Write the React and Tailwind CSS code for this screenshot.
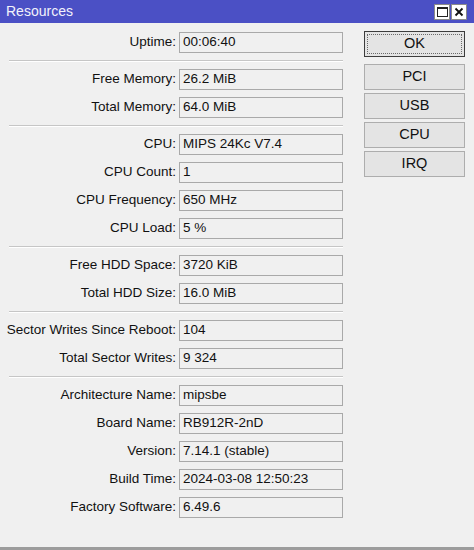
import React from 'react';

const sections = [
  [['Uptime', '00:06:40']],
  [
    ['Free Memory', '26.2 MiB'],
    ['Total Memory', '64.0 MiB'],
  ],
  [
    ['CPU', 'MIPS 24Kc V7.4'],
    ['CPU Count', '1'],
    ['CPU Frequency', '650 MHz'],
    ['CPU Load', '5 %'],
  ],
  [
    ['Free HDD Space', '3720 KiB'],
    ['Total HDD Size', '16.0 MiB'],
  ],
  [
    ['Sector Writes Since Reboot', '104'],
    ['Total Sector Writes', '9 324'],
  ],
  [
    ['Architecture Name', 'mipsbe'],
    ['Board Name', 'RB912R-2nD'],
    ['Version', '7.14.1 (stable)'],
    ['Build Time', '2024-03-08 12:50:23'],
    ['Factory Software', '6.49.6'],
  ],
];

const Field = ({ label, value }) => (
  <div className="flex items-center h-[21px]">
    <div className="w-[176px] text-right whitespace-nowrap">{label}:</div>
    <div className="ml-[3px] w-[164px] h-[21px] border border-[#a9a9a9] bg-[#f0f0f0] px-[3px] flex items-center whitespace-nowrap">
      {value}
    </div>
  </div>
);

const Button = ({ children, isDefault }) => (
  <button
    className={
      'w-[101px] h-[26px] bg-[#e4e4e4] flex items-center justify-center text-[14.5px] ' +
      (isDefault ? 'border border-[#3c3c3c] p-[2px]' : 'border border-[#adadad]')
    }
  >
    {isDefault ? (
      <span className="w-full h-full border border-dotted border-[#6a6a6a] flex items-center justify-center">
        {children}
      </span>
    ) : (
      children
    )}
  </button>
);

const App = () => {
  return (
    <div
      className="w-[474px] h-[550px] bg-[#f0f0f0] flex flex-col text-[13.5px] text-[#111] overflow-hidden"
      style={{ fontFamily: '"Liberation Sans", Arial, sans-serif' }}
    >
      {/* title bar */}
      <div className="h-[23px] bg-[#4b50c5] flex items-center pl-[6px] shrink-0">
        <span className="text-[#f2f2fb] text-[14px]">Resources</span>
        <div className="ml-auto flex gap-[1px] mr-[7px] mt-[1px]">
          <div className="w-[16px] h-[16px] bg-white border border-[#8a8a8a] flex items-center justify-center">
            <div className="w-[11px] h-[10px] border border-[#222] border-t-2" />
          </div>
          <div className="w-[16px] h-[16px] bg-white border border-[#8a8a8a] flex items-center justify-center">
            <svg width="10" height="10" viewBox="0 0 10 10">
              <path d="M1.5 1.5 L8.5 8.5 M8.5 1.5 L1.5 8.5" stroke="#111" strokeWidth="1.8" />
            </svg>
          </div>
        </div>
      </div>

      {/* body */}
      <div className="flex flex-1 pt-[9px]">
        <div className="w-[343px] flex flex-col">
          {sections.map((rows, i) => (
            <React.Fragment key={i}>
              {i > 0 && (
                <div className="ml-[9px] w-[334px] mt-[7px] mb-[7px] border-t border-t-[#c6c6c6] border-b border-b-white" />
              )}
              <div className="flex flex-col gap-[7px]">
                {rows.map(([l, v]) => (
                  <Field key={l} label={l} value={v} />
                ))}
              </div>
            </React.Fragment>
          ))}
        </div>
        <div className="ml-[21px] -mt-[1px] flex flex-col">
          <Button isDefault>OK</Button>
          <div className="mt-[7px] flex flex-col gap-[3px]">
            <Button>PCI</Button>
            <Button>USB</Button>
            <Button>CPU</Button>
            <Button>IRQ</Button>
          </div>
        </div>
      </div>
      <div className="h-[3px] bg-[#9c9c9c] shrink-0" />
    </div>
  );
};

export default App;
